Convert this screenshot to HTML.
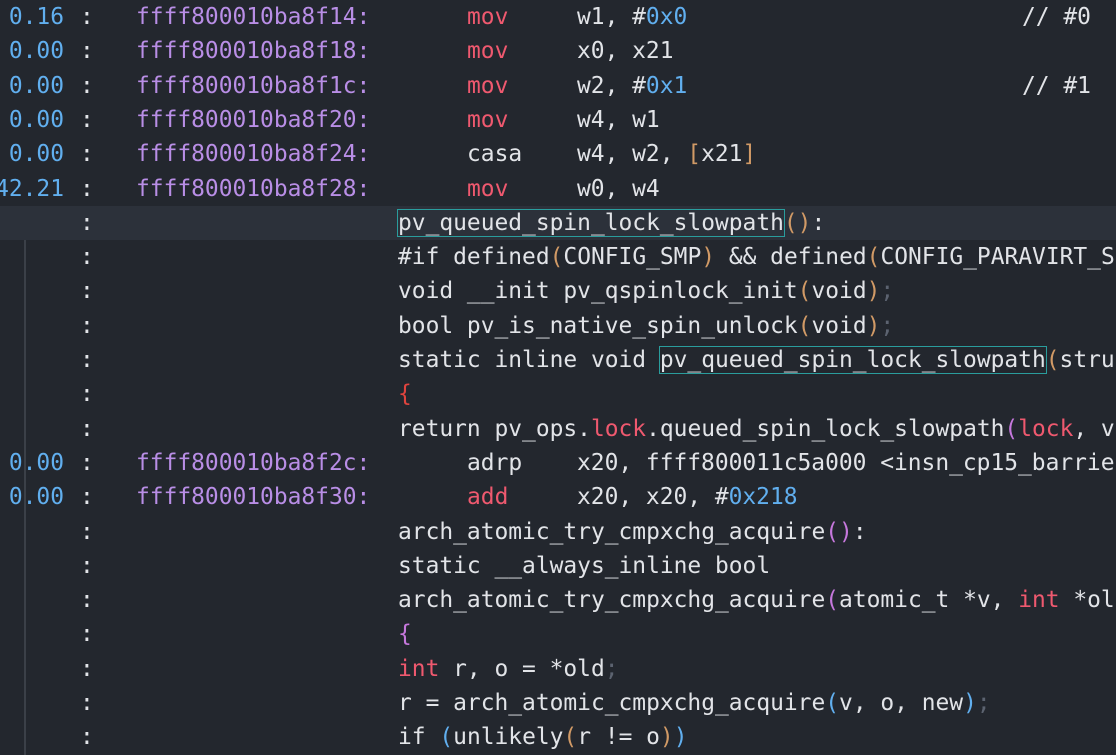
<!DOCTYPE html>
<html><head><meta charset="utf-8"><style>
html,body{margin:0;padding:0;width:1116px;height:755px;overflow:hidden;background:#23272e;}
.r{position:absolute;left:0;width:1116px;height:34.3px;line-height:34.3px;font-family:"DejaVu Sans Mono","Liberation Mono",monospace;font-size:22.9px;color:#e2e4e8;white-space:pre;overflow:hidden;}
.r span.c{position:absolute;top:0}
.p{color:#61afef;right:1052px;text-align:right}
.a{color:#b98ee6}
.m{color:#ef596f}
.b{color:#61afef}
.o{color:#d19a66}
.g{color:#5c6370}
.v{color:#c678dd}
.k{color:#ef596f}
.hl{background:#2c313a}
.guide{position:absolute;left:24px;top:206px;width:2px;height:549px;background:#3b4048}
.box{outline:1.5px solid #2a9d9d;outline-offset:0}
</style></head><body>
<div class="guide"></div>
<div class="r" style="top:0"><span class="c p">0.16</span><span class="c" style="left:80px">:</span><span class="c a" style="left:136px">ffff800010ba8f14:</span><span class="c m" style="left:467px">mov</span><span class="c" style="left:577px">w1, #<span class="b">0x0</span></span><span class="c" style="left:1022px">// #0</span></div>
<div class="r" style="top:34.3px"><span class="c p">0.00</span><span class="c" style="left:80px">:</span><span class="c a" style="left:136px">ffff800010ba8f18:</span><span class="c m" style="left:467px">mov</span><span class="c" style="left:577px">x0, x21</span></div>
<div class="r" style="top:68.6px"><span class="c p">0.00</span><span class="c" style="left:80px">:</span><span class="c a" style="left:136px">ffff800010ba8f1c:</span><span class="c m" style="left:467px">mov</span><span class="c" style="left:577px">w2, #<span class="b">0x1</span></span><span class="c" style="left:1022px">// #1</span></div>
<div class="r" style="top:102.9px"><span class="c p">0.00</span><span class="c" style="left:80px">:</span><span class="c a" style="left:136px">ffff800010ba8f20:</span><span class="c m" style="left:467px">mov</span><span class="c" style="left:577px">w4, w1</span></div>
<div class="r" style="top:137.2px"><span class="c p">0.00</span><span class="c" style="left:80px">:</span><span class="c a" style="left:136px">ffff800010ba8f24:</span><span class="c" style="left:467px">casa</span><span class="c" style="left:577px">w4, w2, <span class="o">[</span>x21<span class="o">]</span></span></div>
<div class="r" style="top:171.5px"><span class="c p">42.21</span><span class="c" style="left:80px">:</span><span class="c a" style="left:136px">ffff800010ba8f28:</span><span class="c m" style="left:467px">mov</span><span class="c" style="left:577px">w0, w4</span></div>
<div class="r hl" style="top:205.8px"><span class="c" style="left:80px">:</span><span class="c" style="left:398px"><span class="box">pv_queued_spin_lock_slowpath</span><span class="o">()</span>:</span></div>
<div class="r" style="top:240.1px"><span class="c" style="left:80px">:</span><span class="c" style="left:398px">#if defined<span class="o">(</span>CONFIG_SMP<span class="o">)</span> &amp;&amp; defined<span class="o">(</span>CONFIG_PARAVIRT_SPINLOCKS<span class="o">)</span></span></div>
<div class="r" style="top:274.4px"><span class="c" style="left:80px">:</span><span class="c" style="left:398px">void __init pv_qspinlock_init<span class="o">(</span>void<span class="o">)</span><span class="g">;</span></span></div>
<div class="r" style="top:308.7px"><span class="c" style="left:80px">:</span><span class="c" style="left:398px">bool pv_is_native_spin_unlock<span class="o">(</span>void<span class="o">)</span><span class="g">;</span></span></div>
<div class="r" style="top:343px"><span class="c" style="left:80px">:</span><span class="c" style="left:398px">static inline void <span class="box">pv_queued_spin_lock_slowpath</span><span class="o">(</span>struct qspinlock</span></div>
<div class="r" style="top:377.3px"><span class="c" style="left:80px">:</span><span class="c" style="left:398px;color:#e0443e">{</span></div>
<div class="r" style="top:411.6px"><span class="c" style="left:80px">:</span><span class="c" style="left:398px">return pv_ops.<span class="k">lock</span>.queued_spin_lock_slowpath<span class="v">(</span><span class="k">lock</span>, val<span class="v">)</span></span></div>
<div class="r" style="top:445.9px"><span class="c p">0.00</span><span class="c" style="left:80px">:</span><span class="c a" style="left:136px">ffff800010ba8f2c:</span><span class="c" style="left:467px">adrp</span><span class="c" style="left:577px">x20, ffff800011c5a000 &lt;insn_cp15_barrier_hooks&gt;</span></div>
<div class="r" style="top:480.2px"><span class="c p">0.00</span><span class="c" style="left:80px">:</span><span class="c a" style="left:136px">ffff800010ba8f30:</span><span class="c m" style="left:467px">add</span><span class="c" style="left:577px">x20, x20, #<span class="b">0x218</span></span></div>
<div class="r" style="top:514.5px"><span class="c" style="left:80px">:</span><span class="c" style="left:398px">arch_atomic_try_cmpxchg_acquire<span class="v">()</span>:</span></div>
<div class="r" style="top:548.8px"><span class="c" style="left:80px">:</span><span class="c" style="left:398px">static __always_inline bool</span></div>
<div class="r" style="top:583.1px"><span class="c" style="left:80px">:</span><span class="c" style="left:398px">arch_atomic_try_cmpxchg_acquire<span class="v">(</span>atomic_t *v, <span class="k">int</span> *old, int new<span class="v">)</span></span></div>
<div class="r" style="top:617.4px"><span class="c" style="left:80px">:</span><span class="c v" style="left:398px">{</span></div>
<div class="r" style="top:651.7px"><span class="c" style="left:80px">:</span><span class="c" style="left:398px"><span class="k">int</span> r, o = *old<span class="g">;</span></span></div>
<div class="r" style="top:686px"><span class="c" style="left:80px">:</span><span class="c" style="left:398px">r = arch_atomic_cmpxchg_acquire<span class="b">(</span>v, o, new<span class="b">)</span><span class="g">;</span></span></div>
<div class="r" style="top:720.3px"><span class="c" style="left:80px">:</span><span class="c" style="left:398px">if <span class="b">(</span>unlikely<span class="o">(</span>r != o<span class="o">)</span><span class="b">)</span></span></div>
</body></html>
